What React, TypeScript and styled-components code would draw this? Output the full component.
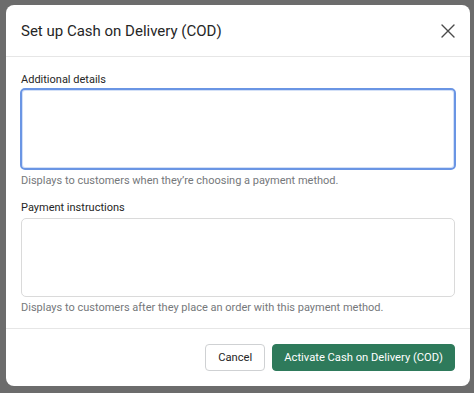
import styled, { createGlobalStyle } from "styled-components";

const GlobalStyle = createGlobalStyle`
  html, body {
    margin: 0;
    padding: 0;
    background: #6c6c6c;
    font-family: Roboto, "Liberation Sans", Arial, sans-serif;
    -webkit-font-smoothing: antialiased;
  }
`;

const Backdrop = styled.div`
  width: 474px;
  height: 393px;
  box-sizing: border-box;
  padding: 5px 4px 0 6px;
  background: #6c6c6c;
`;

const Modal = styled.div`
  width: 464px;
  height: 381px;
  background: #ffffff;
  border-radius: 8px;
  display: flex;
  flex-direction: column;
  overflow: hidden;
`;

const Header = styled.div`
  height: 51px;
  flex-shrink: 0;
  display: flex;
  align-items: center;
  justify-content: space-between;
  padding: 0 15px 0 15px;
  border-bottom: 1px solid #e6e6e6;
`;

const Title = styled.h2`
  margin: 0;
  font-size: 15px;
  font-weight: 400;
  color: #262626;
`;

const CloseButton = styled.button`
  border: none;
  background: none;
  padding: 0;
  width: 14px;
  height: 14px;
  display: flex;
  align-items: center;
  justify-content: center;
  cursor: pointer;
`;

const Body = styled.div`
  height: 272px;
  box-sizing: border-box;
  padding: 14.5px 14px 0 14px;
  border-bottom: 1px solid #e6e6e6;
`;

const Field = styled.div<{ $gap: number }>`
  display: flex;
  flex-direction: column;
  margin-bottom: ${(p) => p.$gap}px;
`;

const Label = styled.label`
  font-size: 11px;
  color: #262626;
  margin: 0 0 1.5px 1px;
  line-height: 15px;
`;

const TextArea = styled.textarea<{ $focused?: boolean }>`
  box-sizing: border-box;
  display: block;
  resize: none;
  font: inherit;
  border-radius: 5px;
  background: #fff;
  outline: none;
  height: ${(p) => (p.$focused ? "82px" : "79px")};
  margin: ${(p) => (p.$focused ? "0" : "1px 1px 0")};
  border: ${(p) => (p.$focused ? "2px solid #6a95e4" : "1px solid #dadada")};
  box-shadow: ${(p) => (p.$focused ? "inset 0 0 0 1px #d3e0f7" : "none")};
`;

const Help = styled.div`
  font-size: 11px;
  color: #75787b;
  margin: 3px 0 0 1px;
  line-height: 15px;
`;

const Footer = styled.div`
  flex: 1;
  display: flex;
  align-items: center;
  justify-content: flex-end;
  gap: 7px;
  padding: 0 15px 0 0;
`;

const Button = styled.button<{ $primary?: boolean }>`
  height: 27px;
  box-sizing: border-box;
  border-radius: 4px;
  font: inherit;
  font-size: 11.2px;
  padding: 0 ${(p) => (p.$primary ? 11 : 12)}px;
  cursor: pointer;
  color: ${(p) => (p.$primary ? "#ffffff" : "#262626")};
  background: ${(p) => (p.$primary ? "#2e7a5b" : "#ffffff")};
  border: 1px solid ${(p) => (p.$primary ? "#2e7a5b" : "#cfd1d3")};
`;

export default function App() {
  return (
    <>
      <GlobalStyle />
      <Backdrop>
        <Modal>
          <Header>
            <Title>Set up Cash on Delivery (COD)</Title>
            <CloseButton aria-label="Close">
              <svg width="14" height="14" viewBox="0 0 14 14">
                <path d="M1 1L13 13M13 1L1 13" stroke="#4a4a4a" strokeWidth="1.4" strokeLinecap="round" />
              </svg>
            </CloseButton>
          </Header>
          <Body>
            <Field $gap={12}>
              <Label>Additional details</Label>
              <TextArea $focused />
              <Help>Displays to customers when they’re choosing a payment method.</Help>
            </Field>
            <Field $gap={0}>
              <Label>Payment instructions</Label>
              <TextArea />
              <Help>Displays to customers after they place an order with this payment method.</Help>
            </Field>
          </Body>
          <Footer>
            <Button>Cancel</Button>
            <Button $primary>Activate Cash on Delivery (COD)</Button>
          </Footer>
        </Modal>
      </Backdrop>
    </>
  );
}
